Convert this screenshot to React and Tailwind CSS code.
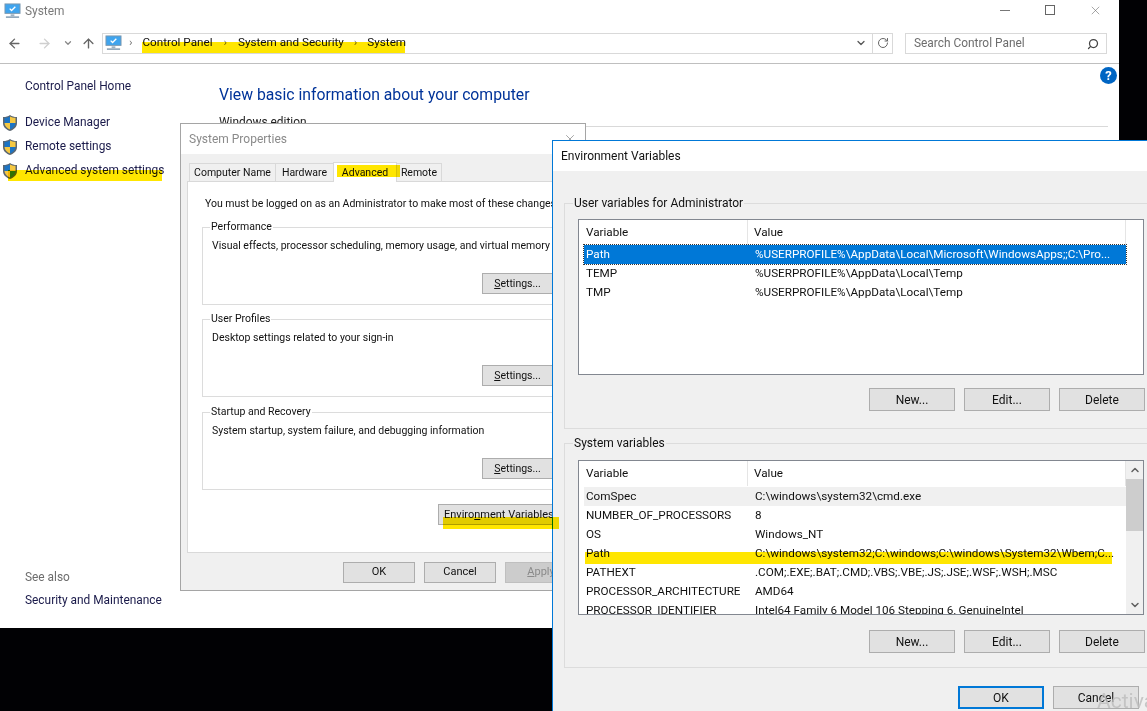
import { ArrowLeft, ArrowRight, ArrowUp, ChevronDown, ChevronUp, RotateCw, Search, X } from "lucide-react";

const font = { fontFamily: 'Roboto, "Noto Sans", sans-serif' };

function Monitor({ className }) {
  return (
    <svg viewBox="0 0 18 17" className={className}>
      <rect x="1" y="1" width="16" height="10" fill="#3fa4ee" stroke="#7b96ad" />
      <path d="M6 6l2 2 4-4" fill="none" stroke="#fff" strokeWidth="1.4" />
      <path d="M7 12h4v2H7z" fill="#9fb2c2" />
      <path d="M2 15h14" stroke="#7b96ad" strokeWidth="1.5" />
    </svg>
  );
}

function Shield({ green }) {
  return (
    <svg viewBox="0 0 16 18" className="w-4 h-[18px] shrink-0">
      <path d="M8 1c2 1.500 4 2 7 2v6c0 4-3 6.500-7 8-4-1.500-7-4-7-8V3c3 0 5-.5 7-2z" fill="#5b6670" />
      <path d="M8 2.500V9H2.500V3.800C4.800 3.700 6.500 3.300 8 2.500z" fill="#1c74c4" />
      <path d="M8 2.500c1.500.8 3.200 1.200 5.500 1.300V9H8z" fill="#f5c842" />
      <path d="M2.500 9H8v6.500C5 14.300 2.800 12.300 2.500 9z" fill="#f5c842" />
      <path d="M8 9h5.500c-.3 3.300-2.500 5.300-5.500 6.500z" fill={green ? "#2f7d1e" : "#1c74c4"} />
    </svg>
  );
}

function Btn({ children, className = "", disabled, focus }) {
  return (
    <button
      className={`flex items-center justify-center whitespace-nowrap ${
        focus ? "border-2 border-[#0078d7] bg-[#e1e1e1]" : disabled ? "border border-[#bfbfbf] bg-[#cccccc] text-[#8a8a8a]" : "border border-[#adadad] bg-[#e1e1e1]"
      } ${className}`}
    >
      {children}
    </button>
  );
}

function SettingsGroup({ title, text, className = "" }) {
  return (
    <fieldset className={`border border-[#dcdcdc] h-[85px] ml-[14px] w-[370px] px-[9px] ${className}`}>
      <legend className="-ml-[2px] px-[1px] leading-[14px]">{title}</legend>
      <p className="leading-[16px] mt-[4px] whitespace-nowrap">{text}</p>
      <div className="mt-[19px] ml-[270px]">
        <Btn className="w-[71px] h-[21px] pt-px">
          <span><u>S</u>ettings...</span>
        </Btn>
      </div>
    </fieldset>
  );
}

function VarRow({ name, value, selected, hover }) {
  return (
    <div className={`flex h-[19px] items-center whitespace-nowrap ml-[5px] mr-[17px] ${selected ? "bg-[#0078d7] text-white outline-1 outline-dotted outline-[#333]" : hover ? "bg-[#f0f0f0]" : ""}`}>
      <span className="w-[171px] pl-[2px] shrink-0">{name}</span>
      <span className="overflow-hidden">{value}</span>
    </div>
  );
}

function VarList({ rows, scroll, className = "" }) {
  return (
    <div className={`relative border border-[#828790] bg-white ml-[13px] w-[566px] overflow-hidden text-[11.7px] ${className}`}>
      <div className="flex h-[25px] items-center">
        <span className="w-[169px] pl-[7px] border-r border-[#e5e5e5] h-full flex items-center">Variable</span>
        <span className="pl-[6px] flex-1 border-r border-[#e5e5e5] h-full flex items-center mr-[17px]">Value</span>
      </div>
      <div className={scroll ? "mt-px" : ""}>
        {rows.map((r) => (
          <VarRow key={r.name} {...r} />
        ))}
      </div>
      {scroll && (
        <div className="absolute right-0 top-0 bottom-0 w-[17px] bg-[#f0f0f0] flex flex-col items-center">
          <ChevronUp className="w-3 h-3 mt-[3px] text-[#606060]" strokeWidth={3} />
          <div className="w-full h-[52px] bg-[#cdcdcd] mt-[3px]" />
          <ChevronDown className="w-3 h-3 mt-auto mb-[3px] text-[#606060]" strokeWidth={3} />
        </div>
      )}
    </div>
  );
}

function VarButtons({ className = "" }) {
  return (
    <div className={`flex gap-[9px] ml-[304px] ${className}`}>
      <Btn className="w-[86px] h-[23px]">New...</Btn>
      <Btn className="w-[86px] h-[23px]">Edit...</Btn>
      <Btn className="w-[86px] h-[23px]">Delete</Btn>
    </div>
  );
}

const userVars = [
  { name: "Path", value: "%USERPROFILE%\\AppData\\Local\\Microsoft\\WindowsApps;;C:\\Pro...", selected: true },
  { name: "TEMP", value: "%USERPROFILE%\\AppData\\Local\\Temp" },
  { name: "TMP", value: "%USERPROFILE%\\AppData\\Local\\Temp" },
];

const systemVars = [
  { name: "ComSpec", value: "C:\\windows\\system32\\cmd.exe", hover: true },
  { name: "NUMBER_OF_PROCESSORS", value: "8" },
  { name: "OS", value: "Windows_NT" },
  { name: "Path", value: "C:\\windows\\system32;C:\\windows;C:\\windows\\System32\\Wbem;C..." },
  { name: "PATHEXT", value: ".COM;.EXE;.BAT;.CMD;.VBS;.VBE;.JS;.JSE;.WSF;.WSH;.MSC" },
  { name: "PROCESSOR_ARCHITECTURE", value: "AMD64" },
  { name: "PROCESSOR_IDENTIFIER", value: "Intel64 Family 6 Model 106 Stepping 6, GenuineIntel" },
];

function Highlight({ className }) {
  return <div className={`absolute bg-[#ffe600] mix-blend-multiply ${className}`} />;
}

export default function App() {
  return (
    <div style={font} className="relative w-[1147px] h-[711px] bg-[#010104] overflow-hidden text-[#111]">
      {/* Control panel window */}
      <div className="absolute left-0 top-0 w-[1119px] h-[628px] bg-white flex flex-col text-[11.9px]">
        <div className="flex items-center h-[22px] pl-[4px] shrink-0">
          <Monitor className="w-[17px] h-[16px]" />
          <span className="ml-[4px] pt-px text-[#7a7a7a]">System</span>
          <div className="ml-auto flex items-center gap-[35px] pr-[18px] -mt-[2px]">
            <div className="w-[10px] h-px bg-[#777]" />
            <div className="w-[10px] h-[10px] border border-[#666]" />
            <X className="w-[11px] h-[11px] text-[#666] scale-125" strokeWidth={1} />
          </div>
        </div>

        <div className="flex items-center h-[42px] border-b border-[#bfbfbf] shrink-0 pt-[1px]">
          <ArrowLeft className="w-[15px] h-[15px] ml-[7px] text-[#666]" strokeWidth={2.2} />
          <ArrowRight className="w-[15px] h-[15px] ml-[15px] text-[#cfcfcf]" strokeWidth={2.2} />
          <ChevronDown className="w-[10px] h-[10px] ml-[11px] text-[#888]" strokeWidth={3} />
          <ArrowUp className="w-[15px] h-[15px] ml-[8px] text-[#666]" strokeWidth={2.2} />
          <div className="ml-[6px] w-[791px] h-[21px] border border-[#d9d9d9] flex items-center text-[11.7px]">
            <Monitor className="w-[17px] h-[16px] ml-[2px]" />
            <span className="ml-[7px] text-[#777]">›</span>
            <span className="ml-[10px]">Control Panel</span>
            <span className="mx-[11px] text-[#777]">›</span>
            <span>System and Security</span>
            <span className="mx-[10px] text-[#777]">›</span>
            <span>System</span>
            <ChevronDown className="w-[12px] h-[12px] ml-auto mr-[5px] text-[#555]" strokeWidth={2.5} />
            <div className="h-full border-l border-[#d9d9d9] w-[20px] flex items-center justify-center">
              <RotateCw className="w-[12px] h-[12px] text-[#666]" strokeWidth={2} />
            </div>
          </div>
          <div className="ml-[12px] w-[202px] h-[21px] border border-[#d9d9d9] flex items-center pl-[8px] pr-[7px] pt-px text-[#6d6d6d]">
            <span>Search Control Panel</span>
            <Search className="w-[12px] h-[12px] ml-auto -scale-x-100 text-[#444]" strokeWidth={2.5} />
          </div>
        </div>

        <div className="flex flex-1 min-h-0">
          <aside className="w-[219px] shrink-0 flex flex-col text-[#1a1a4a]">
            <div className="ml-[25px] mt-[13px] leading-[18px]">Control Panel Home</div>
            <div className="mt-[19px] flex flex-col gap-[6px] pl-[2px]">
              {["Device Manager", "Remote settings", "Advanced system settings"].map((t, i) => (
                <div key={t} className="flex items-center gap-[7px] h-[18px] whitespace-nowrap">
                  <Shield green={i === 2} />
                  <span>{t}</span>
                </div>
              ))}
            </div>
            <div className="mt-auto ml-[25px] mb-[19px] leading-[18px]">
              <div className="text-[#6d6d6d]">See also</div>
              <div className="mt-[5px]">Security and Maintenance</div>
            </div>
          </aside>
          <main className="flex-1 pr-[11px] relative">
            <h1 className="text-[15.75px] text-[#003399] mt-[20px] leading-[22px]">View basic information about your computer</h1>
            <div className="text-[#222] mt-[8px] leading-[16px]">Windows edition</div>
            <div className="border-b border-[#d9d9d9] -mt-[4px]" />
            <div className="absolute right-[2px] top-[3px] w-[17px] h-[17px] rounded-full bg-[#0065c3] text-white text-[13px] font-bold flex items-center justify-center">?</div>
          </main>
        </div>
      </div>

      {/* System Properties dialog */}
      <div className="absolute left-[180px] top-[123px] w-[406px] h-[468px] border border-[#a5a5a5] bg-[#f0f0f0] flex flex-col text-[10.5px]">
        <div className="h-[30px] bg-white flex items-center pl-[8px] text-[12px] text-[#8a8a8a] shrink-0">
          <span>System Properties</span>
          <X className="w-[14px] h-[14px] ml-auto mr-[8px] text-[#666]" strokeWidth={1} />
        </div>
        <div className="flex items-end h-[27px] ml-[8px] shrink-0">
          <div className="w-[87px] h-[18px] pt-px border border-[#d9d9d9] border-b-0 flex items-center justify-center">Computer Name</div>
          <div className="w-[58px] h-[18px] pt-px border-r border-t border-[#d9d9d9] flex items-center justify-center">Hardware</div>
          <div className="w-[64px] h-[20px] border border-[#d9d9d9] border-b-0 flex items-center justify-center bg-white -mb-[1px] -ml-px relative">Advanced</div>
          <div className="w-[45px] h-[18px] pt-px border-r border-t border-[#d9d9d9] flex items-center justify-center">Remote</div>
        </div>
        <div className="ml-[6px] w-[394px] h-[372px] bg-white border border-[#d9d9d9]">
          <p className="ml-[17px] mt-[14px] leading-[16px] whitespace-nowrap">You must be logged on as an Administrator to make most of these changes.</p>
          <SettingsGroup className="mt-[8px]" title="Performance" text="Visual effects, processor scheduling, memory usage, and virtual memory" />
          <SettingsGroup className="mt-[7px]" title="User Profiles" text="Desktop settings related to your sign-in" />
          <SettingsGroup className="mt-[8px]" title="Startup and Recovery" text="System startup, system failure, and debugging information" />
          <div className="mt-[14px] ml-[250px]">
            <Btn className="w-[130px] h-[21px] pt-px justify-start pl-[5px] text-[11px]">
              <span>Enviro<u>n</u>ment Variables...</span>
            </Btn>
          </div>
        </div>
        <div className="flex gap-[9px] ml-[162px] mt-[9px] text-[11px]">
          <Btn className="w-[72px] h-[21px]">OK</Btn>
          <Btn className="w-[72px] h-[21px]">Cancel</Btn>
          <Btn className="w-[72px] h-[21px]" disabled>
            <span><u>A</u>pply</span>
          </Btn>
        </div>
      </div>

      {/* Environment Variables dialog */}
      <div className="absolute left-[552px] top-[140px] w-[620px] h-[600px] border border-[#0078d7] bg-[#f0f0f0] text-[12px]">
        <div className="h-[30px] bg-white flex items-center pl-[8px]">Environment Variables</div>
        <fieldset className="border border-[#dcdcdc] ml-[11px] w-[600px] h-[233px] mt-[25px]">
          <legend className="ml-[8px] px-[1px] leading-[14px]">User variables for Administrator</legend>
          <VarList className="mt-[9px] h-[156px]" rows={userVars} />
          <VarButtons className="mt-[13px]" />
        </fieldset>
        <fieldset className="border border-[#dcdcdc] ml-[11px] w-[600px] h-[232px] mt-[7px]">
          <legend className="ml-[8px] px-[1px] leading-[14px]">System variables</legend>
          <VarList className="mt-[10px] h-[155px]" rows={systemVars} scroll />
          <VarButtons className="mt-[15px]" />
        </fieldset>
        <div className="flex gap-[9px] ml-[405px] mt-[18px]">
          <Btn className="w-[86px] h-[23px]" focus>OK</Btn>
          <Btn className="w-[86px] h-[23px]">Cancel</Btn>
        </div>
      </div>

      {/* Yellow marker strokes and watermark */}
      <Highlight className="left-[142px] top-[42px] w-[263px] h-[11px]" />
      <Highlight className="left-[8px] top-[170px] w-[154px] h-[11px]" />
      <Highlight className="left-[337px] top-[165px] w-[63px] h-[12px]" />
      <Highlight className="left-[443px] top-[517px] w-[116px] h-[12px]" />
      <Highlight className="left-[585px] top-[552px] w-[527px] h-[12px]" />
      <span className="absolute left-[1097px] top-[686px] text-[21px] text-[#bdbdbd] opacity-80">Activa</span>
    </div>
  );
}
